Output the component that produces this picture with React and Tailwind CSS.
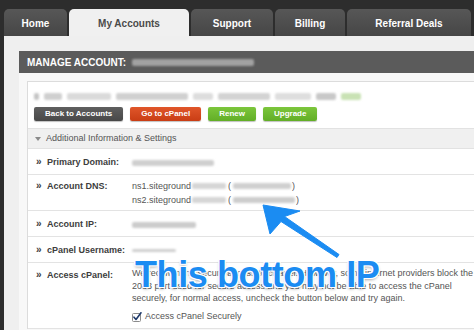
const tabs = [
  { label: 'Home', w: 'w-[63px]' },
  { label: 'My Accounts', w: 'w-[120px]', active: true },
  { label: 'Support', w: 'w-[82px]' },
  { label: 'Billing', w: 'w-[70px]' },
  { label: 'Referral Deals', w: 'w-[124px]' },
]

// masked-out values are rendered as soft grey smudges
function Smudge({ className }) {
  return <span className={`inline-block align-middle rounded-[2px] blur-[1.2px] ${className}`} />
}

function Btn({ children, className }) {
  return (
    <span className={`h-[14px] px-[11px] rounded-[2px] text-white font-bold text-[8px] leading-[14px] shadow-[0_1px_1px_rgba(0,0,0,0.25)] ${className}`}>
      {children}
    </span>
  )
}

function Row({ label, children, className = 'pt-[6px] pb-[5px]' }) {
  return (
    <div className={`flex border-b border-[#e3e3e3] ${className}`}>
      <div className="w-[104px] shrink-0 pl-[8px] flex items-start leading-[14px] text-[9px] font-bold text-[#3d3d3d]">
        <span className="w-[11px] text-[10px]">»</span>
        <span>{label}</span>
      </div>
      <div className="text-[9px] leading-[14px] text-[#555]">{children}</div>
    </div>
  )
}

export default function App() {
  return (
    <div className="relative w-[474px] h-[330px] overflow-hidden bg-[#2d2d2d] font-['Liberation_Sans',Arial,sans-serif]">
      <nav className="flex h-[36px] items-end gap-[2px] pl-[4px]">
        {tabs.map((t) => (
          <div
            key={t.label}
            className={`${t.w} h-[27px] shrink-0 rounded-t-[5px] flex items-center justify-center pt-[1px] text-[10px] font-bold ${
              t.active
                ? 'bg-[#f0f0f0] text-[#4a4a4a]'
                : 'bg-gradient-to-b from-[#575757] to-[#464646] text-white'
            }`}
          >
            {t.label}
          </div>
        ))}
      </nav>

      <div className="flex h-[294px]">
        <div className="w-[4px] shrink-0" />
        <main className="flex-1 bg-[#efefef] pt-[15px] pl-[15px] min-w-0">
          <div className="h-[22px] bg-[#5b5b5b] flex items-center pl-[8px] gap-[6px]">
            <span className="text-white font-bold text-[10px]">MANAGE ACCOUNT:</span>
            <Smudge className="w-[122px] h-[7px] bg-[#a2a2a2]" />
          </div>

          <div className="bg-[#f8f8f8] pl-[8px] pt-[8px] h-full">
            <div className="bg-white border-l border-t border-[#dcdcdc]">
              <div className="px-[6px] pt-[10px]">
                <div className="flex items-center gap-[5px] h-[9px]">
                  <Smudge className="w-[5px] h-[7px] bg-[#c4c4c4]" />
                  <Smudge className="w-[18px] h-[7px] bg-[#cfcfcf]" />
                  <Smudge className="w-[44px] h-[7px] bg-[#dadada]" />
                  <Smudge className="w-[72px] h-[7px] bg-[#d0d0d0]" />
                  <Smudge className="w-[20px] h-[7px] bg-[#dddddd]" />
                  <Smudge className="w-[52px] h-[7px] bg-[#d3d3d3]" />
                  <Smudge className="w-[36px] h-[7px] bg-[#dedede]" />
                  <Smudge className="w-[20px] h-[7px] bg-[#c8c8c8]" />
                  <Smudge className="w-[20px] h-[7px] bg-[#c9e2b4]" />
                </div>
                <div className="flex gap-[7px] mt-[6px]">
                  <Btn className="bg-gradient-to-b from-[#5f5f5f] to-[#484848]">Back to Accounts</Btn>
                  <Btn className="bg-gradient-to-b from-[#e0562a] to-[#c93d14]">Go to cPanel</Btn>
                  <Btn className="bg-gradient-to-b from-[#7cc63c] to-[#62ae26]">Renew</Btn>
                  <Btn className="bg-gradient-to-b from-[#7cc63c] to-[#62ae26]">Upgrade</Btn>
                </div>
              </div>

              <div className="mt-[7px] h-[21px] bg-[#f0f0f0] border-y border-[#e2e2e2] flex items-center pl-[7px] gap-[5px] text-[9px] text-[#555]">
                <svg width="6" height="4" viewBox="0 0 6 4">
                  <path d="M0 0h6L3 4z" fill="#8a8a8a" />
                </svg>
                <span>Additional Information &amp; Settings</span>
              </div>

              <Row label="Primary Domain:">
                <Smudge className="w-[82px] h-[6px] bg-[#cfcfcf]" />
              </Row>

              <Row label="Account DNS:" className="pt-[4px] pb-[3px]">
                <div className="flex items-center">
                  ns1.siteground
                  <Smudge className="w-[34px] h-[6px] bg-[#d6d6d6] ml-[1px]" />
                  <span className="ml-[2px]">(</span>
                  <Smudge className="w-[58px] h-[6px] bg-[#d0d0d0] ml-[2px]" />
                  <span className="ml-[1px]">)</span>
                </div>
                <div className="flex items-center">
                  ns2.siteground
                  <Smudge className="w-[34px] h-[6px] bg-[#d6d6d6] ml-[1px]" />
                  <span className="ml-[2px]">(</span>
                  <Smudge className="w-[62px] h-[6px] bg-[#cdcdcd] ml-[2px]" />
                  <span className="ml-[1px]">)</span>
                </div>
              </Row>

              <Row label="Account IP:">
                <Smudge className="w-[64px] h-[6px] bg-[#cccccc]" />
              </Row>

              <Row label="cPanel Username:">
                <Smudge className="w-[44px] h-[3px] bg-[#cfcfcf]" />
              </Row>

              <div className="flex border-b border-[#e3e3e3] pt-[4px] pb-[4px]">
                <div className="w-[104px] shrink-0 pl-[8px] flex items-start pt-[1px] leading-[14px] text-[9px] font-bold text-[#3d3d3d]">
                  <span className="w-[11px] text-[10px]">»</span>
                  <span>Access cPanel:</span>
                </div>
                <div className="text-[9px] leading-[12.5px] text-[#555] whitespace-nowrap">
                  <div>We recommend secure access to cPanel. However, some internet providers block the</div>
                  <div>2083 port used for secure access and you may not be able to access the cPanel</div>
                  <div>securely, for normal access, uncheck the button below and try again.</div>
                  <div className="flex items-center gap-[3px] mt-[5px] h-[14px]">
                    <svg width="10" height="10" viewBox="0 0 10 10">
                      <rect x="0.5" y="1.5" width="8" height="8" rx="1" fill="#fff" stroke="#8c8c8c" />
                      <path d="M2 5.2l2 2.3L9 0.8" fill="none" stroke="#1f3a6b" strokeWidth="1.6" strokeLinecap="round" strokeLinejoin="round" />
                    </svg>
                    <span>Access cPanel Securely</span>
                  </div>
                </div>
              </div>
            </div>
          </div>
        </main>
      </div>

      {/* callout arrow */}
      <svg className="absolute left-0 top-0 pointer-events-none" width="474" height="330" viewBox="0 0 474 330">
        <polygon
          points="263,205 300,211 284.5,216.5 339,254.5 337,257.5 281,221.5 270,234"
          fill="#1b8cf2"
          stroke="#1b8cf2"
          strokeWidth="1"
          strokeLinejoin="round"
        />
      </svg>

      <div className="absolute left-[135px] top-[257px] text-[36px] leading-[36px] font-bold tracking-[-0.4px] text-[#1b8cf2] whitespace-nowrap [text-shadow:0_0_2px_#fff,1px_1px_0_#fff,-1px_-1px_0_#fff,1px_-1px_0_#fff,-1px_1px_0_#fff,0_2px_3px_rgba(0,0,0,0.35)]">
        This bottom IP
      </div>
    </div>
  )
}
